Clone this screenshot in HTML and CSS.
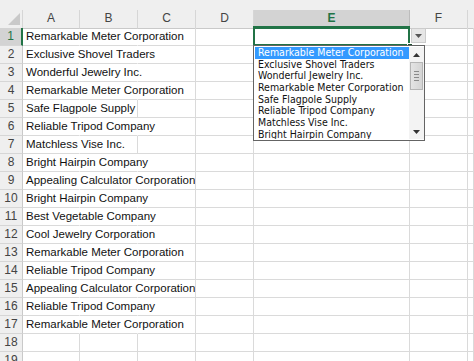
FILE: index.html
```html
<!DOCTYPE html>
<html>
<head>
<meta charset="utf-8">
<link rel="stylesheet" href="styles.css">
</head>
<body>
<div class="sheet">
  <div class="topbar"></div>
  <div class="row hdr">
    <div class="corner"><svg width="22" height="17" viewBox="0 0 22 17"><polygon points="20,3 20,15 8,15" fill="#c9c9c9"/></svg></div>
    <div class="ch">A</div><div class="ch">B</div><div class="ch">C</div><div class="ch">D</div><div class="ch sel">E</div><div class="ch">F</div><div class="ch last"></div>
  </div>
  <div class="row"><div class="rh sel">1</div><div class="c o">Remarkable Meter Corporation</div><div class="c o"></div><div class="c"></div><div class="c"></div><div class="c e1"></div><div class="c"></div><div class="c"></div></div>
  <div class="row"><div class="rh">2</div><div class="c o">Exclusive Shovel Traders</div><div class="c o"></div><div class="c"></div><div class="c"></div><div class="c"></div><div class="c"></div><div class="c"></div></div>
  <div class="row"><div class="rh">3</div><div class="c o">Wonderful Jewelry Inc.</div><div class="c o"></div><div class="c"></div><div class="c"></div><div class="c"></div><div class="c"></div><div class="c"></div></div>
  <div class="row"><div class="rh">4</div><div class="c o">Remarkable Meter Corporation</div><div class="c o"></div><div class="c"></div><div class="c"></div><div class="c"></div><div class="c"></div><div class="c"></div></div>
  <div class="row"><div class="rh">5</div><div class="c o">Safe Flagpole Supply</div><div class="c"></div><div class="c"></div><div class="c"></div><div class="c"></div><div class="c"></div><div class="c"></div></div>
  <div class="row"><div class="rh">6</div><div class="c o">Reliable Tripod Company</div><div class="c o"></div><div class="c"></div><div class="c"></div><div class="c"></div><div class="c"></div><div class="c"></div></div>
  <div class="row"><div class="rh">7</div><div class="c o">Matchless Vise Inc.</div><div class="c"></div><div class="c"></div><div class="c"></div><div class="c"></div><div class="c"></div><div class="c"></div></div>
  <div class="row"><div class="rh">8</div><div class="c o">Bright Hairpin Company</div><div class="c o"></div><div class="c"></div><div class="c"></div><div class="c"></div><div class="c"></div><div class="c"></div></div>
  <div class="row"><div class="rh">9</div><div class="c o">Appealing Calculator Corporation</div><div class="c o"></div><div class="c"></div><div class="c"></div><div class="c"></div><div class="c"></div><div class="c"></div></div>
  <div class="row"><div class="rh">10</div><div class="c o">Bright Hairpin Company</div><div class="c o"></div><div class="c"></div><div class="c"></div><div class="c"></div><div class="c"></div><div class="c"></div></div>
  <div class="row"><div class="rh">11</div><div class="c o">Best Vegetable Company</div><div class="c o"></div><div class="c"></div><div class="c"></div><div class="c"></div><div class="c"></div><div class="c"></div></div>
  <div class="row"><div class="rh">12</div><div class="c o">Cool Jewelry Corporation</div><div class="c o"></div><div class="c"></div><div class="c"></div><div class="c"></div><div class="c"></div><div class="c"></div></div>
  <div class="row"><div class="rh">13</div><div class="c o">Remarkable Meter Corporation</div><div class="c o"></div><div class="c"></div><div class="c"></div><div class="c"></div><div class="c"></div><div class="c"></div></div>
  <div class="row"><div class="rh">14</div><div class="c o">Reliable Tripod Company</div><div class="c o"></div><div class="c"></div><div class="c"></div><div class="c"></div><div class="c"></div><div class="c"></div></div>
  <div class="row"><div class="rh">15</div><div class="c o">Appealing Calculator Corporation</div><div class="c o"></div><div class="c"></div><div class="c"></div><div class="c"></div><div class="c"></div><div class="c"></div></div>
  <div class="row"><div class="rh">16</div><div class="c o">Reliable Tripod Company</div><div class="c o"></div><div class="c"></div><div class="c"></div><div class="c"></div><div class="c"></div><div class="c"></div></div>
  <div class="row"><div class="rh">17</div><div class="c o">Remarkable Meter Corporation</div><div class="c o"></div><div class="c"></div><div class="c"></div><div class="c"></div><div class="c"></div><div class="c"></div></div>
  <div class="row"><div class="rh">18</div><div class="c"></div><div class="c"></div><div class="c"></div><div class="c"></div><div class="c"></div><div class="c"></div><div class="c"></div></div>
  <div class="row"><div class="rh">19</div><div class="c"></div><div class="c"></div><div class="c"></div><div class="c"></div><div class="c"></div><div class="c"></div><div class="c"></div></div>

  <div class="selbox"></div>
  <div class="handle"></div>
  <div class="ddbtn"><svg width="7" height="4" viewBox="0 0 7 4"><polygon points="0,0 7,0 3.5,4" fill="#555"/></svg></div>
  <div class="dd">
    <div class="items">
      <div class="it hi">Remarkable Meter Corporation</div>
      <div class="it">Exclusive Shovel Traders</div>
      <div class="it">Wonderful Jewelry Inc.</div>
      <div class="it">Remarkable Meter Corporation</div>
      <div class="it">Safe Flagpole Supply</div>
      <div class="it">Reliable Tripod Company</div>
      <div class="it">Matchless Vise Inc.</div>
      <div class="it">Bright Hairpin Company</div>
    </div>
    <div class="sb">
      <div class="arr"><svg width="7" height="4" viewBox="0 0 7 4"><polygon points="0,4 7,4 3.5,0" fill="#333"/></svg></div>
      <div class="thumb"><span></span><span></span><span></span><span></span></div>
      <div class="track"></div>
      <div class="arr"><svg width="7" height="4" viewBox="0 0 7 4"><polygon points="0,0 7,0 3.5,4" fill="#333"/></svg></div>
    </div>
  </div>
</div>
</body>
</html>
```
FILE: styles.css
```css
html, body {
  margin: 0;
  padding: 0;
  background: #ffffff;
}
body {
  font-family: "Liberation Sans", Arial, sans-serif;
  width: 474px;
  height: 361px;
  overflow: hidden;
}
.sheet {
  position: relative;
  width: 474px;
  height: 361px;
  overflow: hidden;
}
.topbar {
  height: 10px;
  background: #efefef;
}
.row {
  display: grid;
  grid-template-columns: 23px 57px 58px 58px 58px 156px 58px 1fr;
  height: 18px;
}
.hdr {
  background: #efefef;
}
.corner {
  box-sizing: border-box;
  border-right: 1px solid #d6d6d6;
  border-bottom: 1px solid #c9c9c9;
  overflow: hidden;
}
.corner svg { display: block; }
.ch {
  box-sizing: border-box;
  border-right: 1px solid #d6d6d6;
  border-bottom: 1px solid #c9c9c9;
  font-size: 12px;
  color: #444444;
  text-align: center;
  line-height: 17px;
}
.ch.sel {
  background: #d3d3d3;
  color: #217346;
  font-weight: bold;
  border-bottom: 2px solid #217346;
  border-right-color: #bcbcbc;
}
.ch.last { border-right: none; }
.rh {
  box-sizing: border-box;
  background: #efefef;
  border-right: 1px solid #c9c9c9;
  border-bottom: 1px solid #d6d6d6;
  font-size: 12px;
  color: #444444;
  text-align: center;
  line-height: 17px;
}
.rh.sel {
  background: #d3d3d3;
  color: #217346;
  border-right: 2px solid #217346;
}
.c {
  box-sizing: border-box;
  border-right: 1px solid #dadada;
  border-bottom: 1px solid #dadada;
  font-size: 11.5px;
  color: #111111;
  white-space: nowrap;
  line-height: 17px;
  padding-left: 3px;
  overflow: visible;
}
.c.o { border-right-color: transparent; }
.selbox {
  position: absolute;
  left: 253px;
  top: 26px;
  width: 157px;
  height: 20px;
  box-sizing: border-box;
  border: 2px solid #217346;
}
.handle {
  position: absolute;
  left: 407px;
  top: 43px;
  width: 4px;
  height: 4px;
  background: #1d4f30;
  border: 1px solid #ffffff;
}
.ddbtn {
  position: absolute;
  left: 411px;
  top: 28px;
  width: 15px;
  height: 15px;
  box-sizing: border-box;
  background: #e6e6e6;
  border: 1px solid #cccccc;
  display: flex;
  align-items: center;
  justify-content: center;
}
.ddbtn svg { display: block; }
.dd {
  position: absolute;
  left: 253px;
  top: 45px;
  width: 172px;
  height: 96px;
  box-sizing: border-box;
  border: 1px solid #646464;
  background: #ffffff;
  display: flex;
  padding: 1px 0 1px 1px;
}
.items {
  flex: 1;
  overflow: hidden;
}
.it {
  font-family: "DejaVu Sans Condensed", "DejaVu Sans", sans-serif;
  font-size: 10.5px;
  line-height: 11.7px;
  height: 11.7px;
  color: #111111;
  padding-left: 3px;
  white-space: nowrap;
}
.it.hi {
  background: #3399ff;
  color: #ffffff;
}
.sb {
  width: 15px;
  background: #f3f3f3;
  display: flex;
  flex-direction: column;
}
.arr {
  height: 15px;
  display: flex;
  align-items: center;
  justify-content: center;
}
.arr svg { display: block; }
.thumb {
  margin: 0 1px;
  height: 28px;
  box-sizing: border-box;
  border: 1px solid #b5b5b5;
  background: linear-gradient(to right, #e4e4e4, #d4d4d4);
  display: flex;
  flex-direction: column;
  align-items: center;
  justify-content: center;
  gap: 2px;
}
.thumb span {
  display: block;
  width: 5px;
  height: 1px;
  background: #8a8a8a;
}
.track { flex: 1; }
```
